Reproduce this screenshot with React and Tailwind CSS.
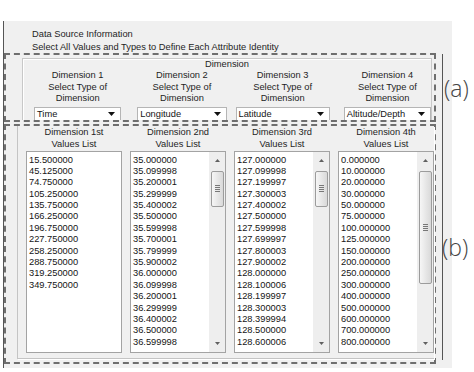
import React from "react";

const list1 = ["15.500000","45.125000","74.750000","105.250000","135.750000","166.250000","196.750000","227.750000","258.250000","288.750000","319.250000","349.750000"];
const list2 = ["35.000000","35.099998","35.200001","35.299999","35.400002","35.500000","35.599998","35.700001","35.799999","35.900002","36.000000","36.099998","36.200001","36.299999","36.400002","36.500000","36.599998"];
const list3 = ["127.000000","127.099998","127.199997","127.300003","127.400002","127.500000","127.599998","127.699997","127.800003","127.900002","128.000000","128.100006","128.199997","128.300003","128.399994","128.500000","128.600006"];
const list4 = ["0.000000","10.000000","20.000000","30.000000","50.000000","75.000000","100.000000","125.000000","150.000000","200.000000","250.000000","300.000000","400.000000","500.000000","600.000000","700.000000","800.000000"];

function Tri({ className = "" }) {
  return (
    <svg width="7" height="4" viewBox="0 0 7 4" className={className}>
      <path d="M0 0 L7 0 L3.5 4 Z" fill="currentColor" />
    </svg>
  );
}

function ScrollBar({ thumbGap, thumbH }) {
  return (
    <div className="w-[16px] h-full bg-[#eeeeee] flex flex-col items-center shrink-0">
      <div className="h-[17px] w-full flex items-center justify-center text-[#606060]">
        <svg width="5" height="3" viewBox="0 0 5 3"><path d="M0 3 L5 3 L2.5 0 Z" fill="currentColor" /></svg>
      </div>
      <div style={{ height: thumbGap }} />
      <div
        style={{ height: thumbH }}
        className="w-[13px] rounded-[2px] border border-[#9c9c9c] bg-gradient-to-r from-[#f6f6f6] to-[#d9d9d9] flex flex-col items-center justify-center gap-[1px]"
      >
        <div className="w-[5px] h-px bg-[#777]" />
        <div className="w-[5px] h-px bg-[#777]" />
        <div className="w-[5px] h-px bg-[#777]" />
        <div className="w-[5px] h-px bg-[#777]" />
      </div>
      <div className="flex-1" />
      <div className="h-[17px] w-full flex items-center justify-center text-[#606060]">
        <svg width="5" height="3" viewBox="0 0 5 3"><path d="M0 0 L5 0 L2.5 3 Z" fill="currentColor" /></svg>
      </div>
    </div>
  );
}

function ValueList({ title, items, scroll }) {
  return (
    <div className="w-[96px] flex flex-col">
      <div className="text-center leading-[11.5px] text-[#1e1e1e]">{title}</div>
      <div className="text-center leading-[11.5px] text-[#1e1e1e]">Values List</div>
      <div className="mt-[0.5px] h-[202px] bg-white border border-[#a3a3a3] flex overflow-hidden">
        <div className="flex-1 pl-[2px] pt-[3px]">
          {items.map((v, i) => (
            <div key={i} className="leading-[11.4px] h-[11.4px] text-[#151515] whitespace-nowrap">{v}</div>
          ))}
        </div>
        {scroll && <ScrollBar thumbGap={scroll[0]} thumbH={scroll[1]} />}
      </div>
    </div>
  );
}

function DimCol({ n, value, w, ml }) {
  return (
    <div className="flex flex-col" style={{ width: w, marginLeft: ml }}>
      <div className="text-center leading-[11.5px] text-[#1e1e1e]">Dimension {n}</div>
      <div className="text-center leading-[11.5px] text-[#1e1e1e]">Select Type of</div>
      <div className="text-center leading-[11.5px] text-[#1e1e1e]">Dimension</div>
      <div className="mt-[2px] h-[14px] bg-white border border-[#b5b5b5] flex items-center justify-between pl-[2px] pr-[5px]">
        <span className="text-[#151515] leading-[12px]">{value}</span>
        <Tri className="text-[#111]" />
      </div>
    </div>
  );
}

export default function App() {
  return (
    <div className="w-[474px] h-[372px] bg-white relative overflow-hidden font-['Liberation_Sans',Arial,sans-serif] text-[9.3px]">
      <div className="ml-[3px] mt-[21px] w-[449px] h-[347px] bg-[#f0f0f0] border-l border-[#555] flex flex-col">
        <div className="pl-[28px] pt-[7px] leading-[12px] text-[#1e1e1e]">Data Source Information</div>
        <div className="pl-[28px] pt-[1px] leading-[12px] text-[#1e1e1e]">Select All Values and Types to Define Each Attribute Identity</div>
        <div className="flex flex-1">
          <div className="w-[432px] flex flex-col">
            {/* (a) */}
            <div className="h-[69px] border-2 border-dashed border-[#6e6e6e] overflow-hidden">
              <div className="ml-[16px] mr-[2px] mt-[3px] h-[80px] border border-[#c8c8c8] shadow-[inset_1px_1px_0_#fff]">
                <div className="text-center leading-[11px] text-[#1e1e1e]">Dimension</div>
                <div className="flex">
                  <DimCol n={1} value="Time" w={88} ml={11} />
                  <DimCol n={2} value="Longitude" w={90} ml={16} />
                  <DimCol n={3} value="Latitude" w={95} ml={9} />
                  <DimCol n={4} value="Altitude/Depth" w={88} ml={14} />
                </div>
              </div>
            </div>
            {/* (b) */}
            <div className="mt-[2px] h-[240px] border-2 border-dashed border-[#6e6e6e] flex flex-col">
              <div className="ml-[11px] mb-[3px] flex-1 border-l border-b border-[#c4c4c4] shadow-[1px_1px_0_#fff] flex flex-col">
                <div className="flex gap-[8px] pl-[8px] pt-[1px]">
                  <ValueList title="Dimension 1st" items={list1} />
                  <ValueList title="Dimension 2nd" items={list2} scroll={[2, 36]} />
                  <ValueList title="Dimension 3rd" items={list3} scroll={[2, 36]} />
                  <ValueList title="Dimension 4th" items={list4} scroll={[2, 113]} />
                </div>
              </div>
            </div>
          </div>
          <div className="ml-[6px] mt-[1px] mb-[8px] border-l border-[#555]" />
        </div>
      </div>
      <div className="absolute left-[444px] top-[74px] text-[23px] leading-[28px] text-[#444] font-['Open_Sans',sans-serif] font-light">(a)</div>
      <div className="absolute left-[442px] top-[233px] text-[23px] leading-[28px] text-[#444] font-['Open_Sans',sans-serif] font-light">(b)</div>
    </div>
  );
}
